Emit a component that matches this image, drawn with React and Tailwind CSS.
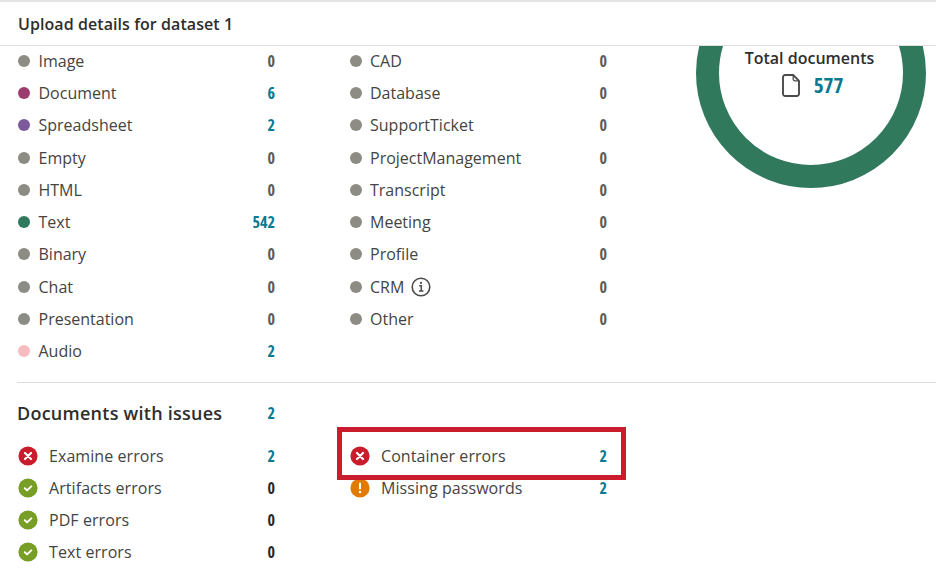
const FONT = "font-['Open_Sans','Noto_Sans',sans-serif]";

const col1 = [
  ["Image", "0", "bg-[#8c8c84]"],
  ["Document", "6", "bg-[#9b3d6e]"],
  ["Spreadsheet", "2", "bg-[#7d5a9b]"],
  ["Empty", "0", "bg-[#8c8c84]"],
  ["HTML", "0", "bg-[#8c8c84]"],
  ["Text", "542", "bg-[#30795d]"],
  ["Binary", "0", "bg-[#8c8c84]"],
  ["Chat", "0", "bg-[#8c8c84]"],
  ["Presentation", "0", "bg-[#8c8c84]"],
  ["Audio", "2", "bg-[#f7bcc0]"],
];
const col2 = [
  ["CAD", "0"],
  ["Database", "0"],
  ["SupportTicket", "0"],
  ["ProjectManagement", "0"],
  ["Transcript", "0"],
  ["Meeting", "0"],
  ["Profile", "0"],
  ["CRM", "0", true],
  ["Other", "0"],
];

function Num({ v, dark }) {
  const color = v === "0" ? (dark ? "text-[#2b2b2b]" : "text-[#5c5c58]") : "text-[#0b7a8f]";
  return (
    <span className={`font-bold text-[16px] [font-stretch:75%] ${color}`}>{v}</span>
  );
}

function Row({ label, value, dot, info }) {
  return (
    <div className="flex items-center h-[32.22px]">
      <span className={`w-[12px] h-[12px] rounded-full shrink-0 ${dot}`} />
      <span className="ml-[8.5px] text-[16px] text-[#444442] flex items-center">
        {label}
        {info && (
          <svg className="ml-[7px]" width="20" height="20" viewBox="0 0 20 20" fill="none" stroke="#4a4a48">
            <circle cx="10" cy="10" r="8.8" strokeWidth="1.6" />
            <path d="M8.2 8.8h2.1v5M8 14h4.4" strokeWidth="1.5" />
            <circle cx="10" cy="5.9" r="1.1" fill="#4a4a48" stroke="none" />
          </svg>
        )}
      </span>
      <span className="ml-auto"><Num v={value} /></span>
    </div>
  );
}

function StatusIcon({ kind }) {
  const bg = kind === "error" ? "#c91c2c" : kind === "warn" ? "#e07b00" : "#789e26";
  return (
    <svg className="shrink-0" width="20" height="20" viewBox="0 0 20 20">
      <circle cx="10" cy="10" r="9.6" fill={bg} />
      {kind === "error" && <path d="M7 7l6 6M13 7l-6 6" stroke="#fff" strokeWidth="2.2" strokeLinecap="round" />}
      {kind === "ok" && <path d="M6.8 10.2l2.3 2.2 4.2-4" stroke="#fff" strokeWidth="2" fill="none" strokeLinecap="round" strokeLinejoin="round" />}
      {kind === "warn" && (
        <>
          <path d="M10 5.6v5" stroke="#fff" strokeWidth="2" strokeLinecap="round" />
          <circle cx="10" cy="14" r="1.2" fill="#fff" />
        </>
      )}
    </svg>
  );
}

function IssueRow({ kind, label, value }) {
  return (
    <div className="flex items-center h-[32px]">
      <StatusIcon kind={kind} />
      <span className="ml-[11px] text-[16px] tracking-[0.07px] text-[#444442]">{label}</span>
      <span className="ml-auto"><Num v={value} dark /></span>
    </div>
  );
}

export default function App() {
  return (
    <div className={`w-[936px] h-[578px] bg-white overflow-hidden flex flex-col ${FONT}`}>
      <header className="h-[46px] shrink-0 border-t-2 border-b border-t-[#e4e4e2] border-b-[#e0e0de] pl-[18px] flex items-center">
        <h1 className="text-[16px] font-semibold tracking-[0.07px] text-[#2e2e2c]">Upload details for dataset 1</h1>
      </header>
      <div className="flex-1 overflow-hidden flex flex-col">
        <div className="flex h-[336px] pl-[18px] shrink-0">
          <div className="w-[257px] -mt-[1.125px]">
            {col1.map(([l, v, d]) => <Row key={l} label={l} value={v} dot={d} />)}
          </div>
          <div className="w-[257.5px] ml-[74.5px] -mt-[1.125px]">
            {col2.map(([l, v, i]) => <Row key={l} label={l} value={v} dot="bg-[#8c8c84]" info={i} />)}
          </div>
          <div className="ml-[89px] -mt-[88px] w-[230px] h-[230px] shrink-0 rounded-full border-[23px] border-[#30795d] flex flex-col items-center pt-[65px]">
            <div className="text-[16px] font-semibold text-[#2e2e2c] leading-[24px] -ml-[3px] whitespace-nowrap">Total documents</div>
            <div className="flex items-center gap-[14px] mt-[1px] pl-[3px]">
              <svg width="18" height="23" viewBox="0 0 18 23" fill="none" stroke="#4a4a48" strokeWidth="1.9">
                <path d="M3.2 1h8L17 6.8V19.8a2.2 2.2 0 0 1-2.2 2.2H3.2A2.2 2.2 0 0 1 1 19.8V3.2A2.2 2.2 0 0 1 3.2 1z" strokeLinejoin="round" />
                <path d="M11.2 1.2v3.8a1.8 1.8 0 0 0 1.8 1.8h4" strokeWidth="1.3" />
              </svg>
              <span className="font-bold text-[21px] leading-[28px] [font-stretch:75%] text-[#0b7a8f]">577</span>
            </div>
          </div>
        </div>
        <div className="ml-[17px] border-t border-[#dcdcda] pt-[15px] shrink-0">
          <div className="flex items-center h-[30px] w-[258px]">
            <h2 className="text-[18px] font-semibold tracking-[0.25px] text-[#2e2e2c]">Documents with issues</h2>
            <span className="ml-auto font-bold text-[16px] [font-stretch:75%] text-[#0b7a8f]">2</span>
          </div>
          <div className="flex mt-[12px] pl-[1px]">
            <div className="w-[257px]">
              <IssueRow kind="error" label="Examine errors" value="2" />
              <IssueRow kind="ok" label="Artifacts errors" value="0" />
              <IssueRow kind="ok" label="PDF errors" value="0" />
              <IssueRow kind="ok" label="Text errors" value="0" />
            </div>
            <div className="w-[257px] ml-[75px] relative">
              <IssueRow kind="error" label="Container errors" value="2" />
              <IssueRow kind="warn" label="Missing passwords" value="2" />
              <div className="absolute left-[-13px] top-[-13px] w-[289px] h-[53px] border-[5px] border-[#c91c2c] pointer-events-none" />
            </div>
          </div>
        </div>
      </div>
    </div>
  );
}
